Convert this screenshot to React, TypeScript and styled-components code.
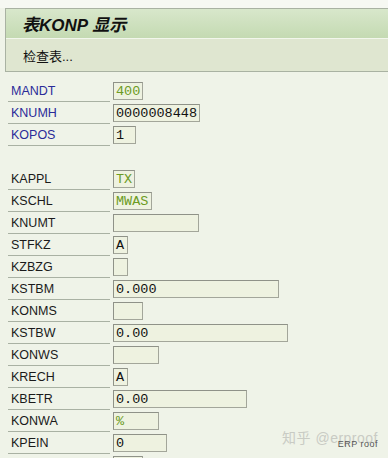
import styled, { createGlobalStyle } from "styled-components";

const GlobalStyle = createGlobalStyle`
    html, body {
        margin: 0;
        padding: 0;
        background: #f6f8f2;
    }
    body {
        font-family: "Liberation Sans", "Noto Sans CJK SC", sans-serif;
        font-size: 12px;
        color: #1a1a1a;
    }
`

const Page = styled.div`
    position: relative;
    width: 388px;
    height: 458px;
    overflow: hidden;
    box-sizing: border-box;
    background: #eff3e8;
    border-top: 8px solid #f6f8f2;
`

const Panel = styled.div`
    margin-left: 5px;
    border: 1px solid #a9b2a2;
    border-right: none;
`

const TitleBar = styled.div`
    height: 29px;
    display: flex;
    align-items: center;
    padding-left: 16px;
    background: linear-gradient(#d8e7cb, #c4dab2);
    border-bottom: 1px solid #f2f6ec;
`

const Title = styled.h1`
    margin: 0;
    font-size: 17px;
    font-weight: bold;
    font-style: italic;
    color: #111;
    font-family: "Liberation Sans", "Noto Sans CJK SC", sans-serif;
`

const Toolbar = styled.div`
    height: 32px;
    display: flex;
    align-items: center;
    padding-left: 17px;
    background: #dfe6d0;
    font-size: 13px;
    color: #111;
`

const Form = styled.div`
    padding: 8px 0 0 8px;
    display: flex;
    flex-direction: column;
`

const Row = styled.div`
    display: flex;
    align-items: center;
    height: 22px;
`

const Label = styled.div<{ $key?: boolean; $blank?: boolean }>`
    width: 99px;
    height: 21px;
    padding-left: 3px;
    display: flex;
    align-items: center;
    border-bottom: 1px solid ${props => (props.$blank ? "transparent" : "#a9b1a3")};
    color: ${props => (props.$key ? "#2b2b98" : "#1a1a1a")};
    font-size: 12.5px;
`

const Field = styled.div<{ $w: number; $green?: boolean }>`
    width: ${props => props.$w}px;
    height: 18px;
    margin-left: 3px;
    box-sizing: border-box;
    border: 1px solid #a3a69a;
    border-top-color: #8f9288;
    border-left-color: #8f9288;
    background: #eef2e0;
    display: flex;
    align-items: center;
    padding-left: 2px;
    font-family: "Liberation Mono", "DejaVu Sans Mono", monospace;
    font-size: 13.5px;
    color: ${props => (props.$green ? "#6c9b24" : "#111")};
    white-space: pre;
`

const Watermark = styled.div`
    position: absolute;
    right: 10px;
    bottom: 11px;
    font-size: 14px;
    color: #c9cbc4;
    letter-spacing: 0.5px;
`

const WatermarkSub = styled.span`
    position: absolute;
    right: 0;
    bottom: -2px;
    font-size: 9px;
    color: #555;
`

interface FieldDef {
    name: string;
    value: string;
    width: number;
    key?: boolean;
    green?: boolean;
}

const fields: (FieldDef | null)[] = [
    { name: "MANDT", value: "400", width: 30, key: true, green: true },
    { name: "KNUMH", value: "0000008448", width: 87, key: true },
    { name: "KOPOS", value: "1", width: 23, key: true },
    null,
    { name: "KAPPL", value: "TX", width: 22, green: true },
    { name: "KSCHL", value: "MWAS", width: 39, green: true },
    { name: "KNUMT", value: "", width: 86 },
    { name: "STFKZ", value: "A", width: 15 },
    { name: "KZBZG", value: "", width: 15 },
    { name: "KSTBM", value: "0.000", width: 166 },
    { name: "KONMS", value: "", width: 30 },
    { name: "KSTBW", value: "0.00", width: 175 },
    { name: "KONWS", value: "", width: 46 },
    { name: "KRECH", value: "A", width: 15 },
    { name: "KBETR", value: "0.00", width: 134 },
    { name: "KONWA", value: "%", width: 46, green: true },
    { name: "KPEIN", value: "0", width: 54 },
    { name: "", value: "", width: 30 },
];

function App() {
    return (
        <Page>
            <GlobalStyle />
            <Panel>
                <TitleBar>
                    <Title>表KONP 显示</Title>
                </TitleBar>
                <Toolbar>检查表...</Toolbar>
            </Panel>
            <Form>
                {fields.map((f, i) =>
                    f ? (
                        <Row key={"f" + i}>
                            <Label $key={f.key}>{f.name}</Label>
                            <Field $w={f.width} $green={f.green}>{f.value}</Field>
                        </Row>
                    ) : (
                        <Row key={"gap" + i}>
                            <Label $blank />
                        </Row>
                    )
                )}
            </Form>
            <Watermark>
                知乎 @erproof
                <WatermarkSub>ERP roof</WatermarkSub>
            </Watermark>
        </Page>
    );
}

export default App;
